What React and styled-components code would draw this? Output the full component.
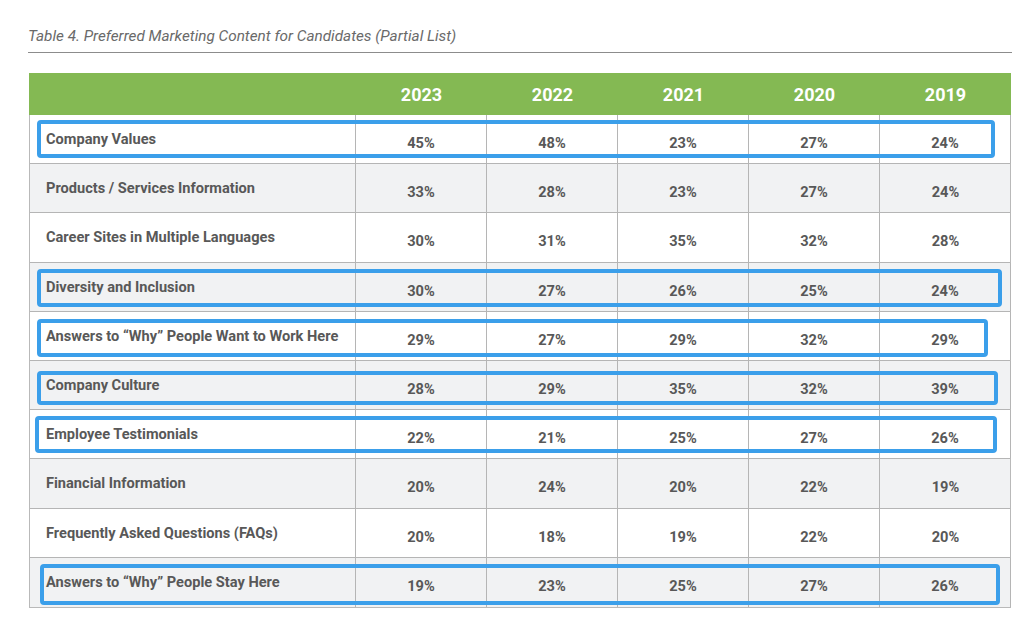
import React from "react";
import styled, { createGlobalStyle } from "styled-components";

const GlobalStyle = createGlobalStyle`
  html, body { margin: 0; padding: 0; background: #ffffff; }
  body { font-family: Roboto, "Liberation Sans", Arial, sans-serif; }
`;

const Page = styled.div`
  width: 1024px;
  height: 626px;
  box-sizing: border-box;
  padding: 27px 12px 0 28px;
  background: #ffffff;
`;

const Caption = styled.div`
  font-family: Roboto, "Liberation Sans", sans-serif;
  font-style: italic;
  font-size: 15.3px;
  line-height: 18px;
  color: #6a6a6a;
  padding-bottom: 7px;
  border-bottom: 1.5px solid #8c8c8c;
  margin-bottom: 20px;
`;

const Table = styled.div`
  margin-left: 1px;
  width: 982px;
  box-sizing: border-box;
  border: 1px solid #b9b9b9;
  border-top: none;
`;

const COLS = "326px repeat(5, 131px)";

const HeaderRow = styled.div`
  display: grid;
  grid-template-columns: ${COLS};
  height: 42px;
  background: #84b953;
  margin: 0 -1px;
  padding: 0 1px;
`;

const HeaderCell = styled.div`
  display: flex;
  align-items: center;
  justify-content: center;
  color: #ffffff;
  font-weight: 700;
  font-size: 18px;
`;

const Row = styled.div`
  position: relative;
  display: grid;
  grid-template-columns: ${COLS};
  height: 49.2px;
  box-sizing: border-box;
  border-bottom: 1px solid #b5b5b5;
  background: ${(p) => (p.$shaded ? "#f1f2f3" : "#ffffff")};
  &:last-child { border-bottom: none; }
`;

const LabelCell = styled.div`
  box-sizing: border-box;
  padding: 16px 0 0 16px;
  border-right: 1px solid #b5b5b5;
  font-weight: 700;
  font-size: 14.6px;
  line-height: 16px;
  color: #585858;
  white-space: nowrap;
`;

const ValueCell = styled.div`
  box-sizing: border-box;
  padding-top: 20px;
  text-align: center;
  border-right: 1px solid #b5b5b5;
  font-weight: 700;
  font-size: 14.6px;
  line-height: 16px;
  color: #585858;
  &:last-child { border-right: none; }
`;

const Highlight = styled.div`
  position: absolute;
  top: ${(p) => p.$t}px;
  bottom: ${(p) => p.$b}px;
  left: ${(p) => p.$l}px;
  right: ${(p) => p.$r}px;
  border: 4px solid #3b9fea;
  border-radius: 4px;
  pointer-events: none;
`;

const years = ["2023", "2022", "2021", "2020", "2019"];

const rows = [
  { label: "Company Values", v: ["45%", "48%", "23%", "27%", "24%"], hl: { t: 5, b: 5, l: 7, r: 15 } },
  { label: "Products / Services Information", v: ["33%", "28%", "23%", "27%", "24%"] },
  { label: "Career Sites in Multiple Languages", v: ["30%", "31%", "35%", "32%", "28%"] },
  { label: "Diversity and Inclusion", v: ["30%", "27%", "26%", "25%", "24%"], hl: { t: 6, b: 4, l: 7, r: 8 } },
  { label: "Answers to \u201CWhy\u201D People Want to Work Here", v: ["29%", "27%", "29%", "32%", "29%"], hl: { t: 7, b: 3, l: 7, r: 22 } },
  { label: "Company Culture", v: ["28%", "29%", "35%", "32%", "39%"], hl: { t: 10, b: 4, l: 7, r: 12 } },
  { label: "Employee Testimonials", v: ["22%", "21%", "25%", "27%", "26%"], hl: { t: 6, b: 5, l: 5, r: 13 } },
  { label: "Financial Information", v: ["20%", "24%", "20%", "22%", "19%"] },
  { label: "Frequently Asked Questions (FAQs)", v: ["20%", "18%", "19%", "22%", "20%"] },
  { label: "Answers to \u201CWhy\u201D People Stay Here", v: ["19%", "23%", "25%", "27%", "26%"], hl: { t: 6, b: 2, l: 10, r: 10 } },
];

export default function App() {
  return (
    <>
      <GlobalStyle />
      <Page>
        <Caption>Table 4. Preferred Marketing Content for Candidates (Partial List)</Caption>
        <Table>
          <HeaderRow>
            <HeaderCell />
            {years.map((y) => (
              <HeaderCell key={y}>{y}</HeaderCell>
            ))}
          </HeaderRow>
          {rows.map((r, i) => (
            <Row key={r.label} $shaded={i % 2 === 1}>
              <LabelCell>{r.label}</LabelCell>
              {r.v.map((v, j) => (
                <ValueCell key={j}>{v}</ValueCell>
              ))}
              {r.hl && <Highlight $t={r.hl.t} $b={r.hl.b} $l={r.hl.l} $r={r.hl.r} />}
            </Row>
          ))}
        </Table>
      </Page>
    </>
  );
}
